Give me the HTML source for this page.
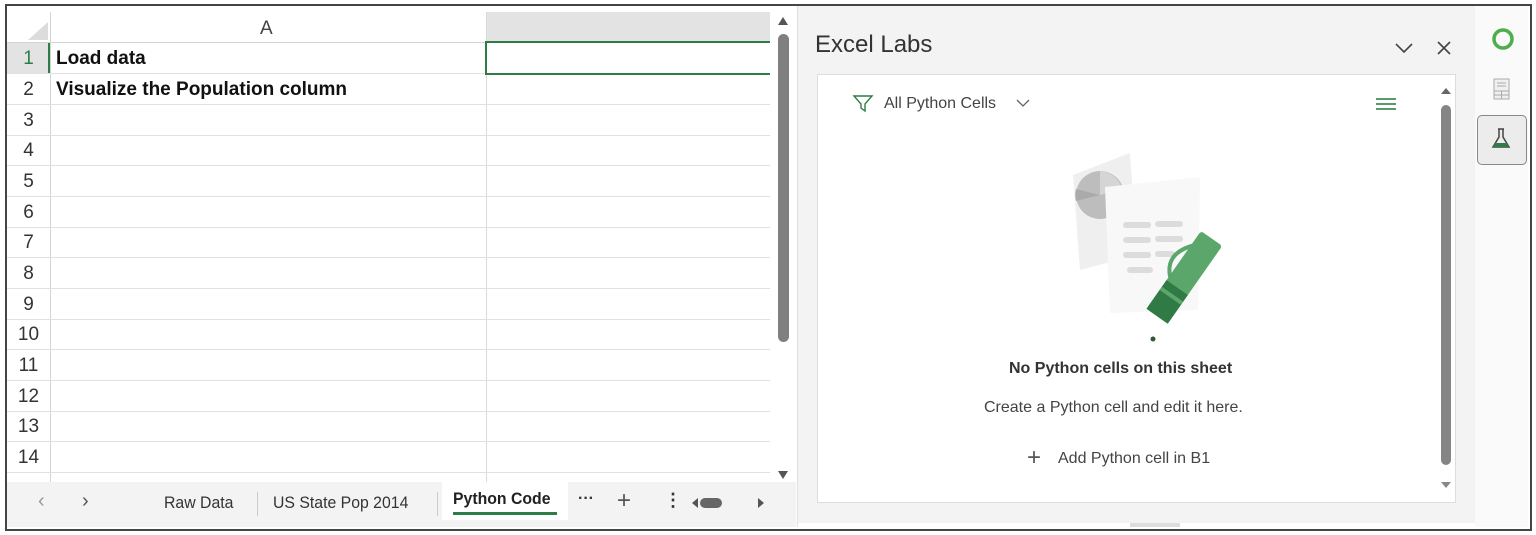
<!DOCTYPE html>
<html><head><style>
body{margin:0;width:1536px;height:535px;background:#fff;position:relative;overflow:hidden;font-family:"Liberation Sans",sans-serif}
.a{position:absolute}
.frame{left:5px;top:4px;width:1523px;height:523px;border:2px solid #444;box-sizing:content-box}
.hl{position:absolute;height:1px;background:#e1e1e1}
.rn{position:absolute;left:7px;width:43px;text-align:center;font-size:19px;color:#333}
.t{font-weight:bold;font-size:19px;color:#111;position:absolute;left:56px}
</style></head><body>
<div class="a frame"></div>
<div class="a" style="left:7px;top:12px;width:763px;height:30px;background:#fff;border-bottom:1px solid #d4d4d4"></div>
<div class="a" style="left:486px;top:12px;width:284px;height:30px;background:#e3e3e3;border-bottom:1px solid #c8c8c8"></div>
<svg class="a" style="left:28px;top:22px" width="20" height="18"><polygon points="20,0 20,18 0,18" fill="#dcdcdc"/></svg>
<div class="a" style="left:260px;top:18px;font-size:19px;color:#444">A</div>
<div class="a" style="left:50px;top:12px;width:1px;height:470px;background:#d4d4d4"></div>
<div class="a" style="left:486px;top:12px;width:1px;height:470px;background:#dadada"></div>
<div class="a" style="left:7px;top:43px;width:43px;height:30px;background:#e3e3e3"></div>
<div class="a" style="left:48px;top:43px;width:2px;height:30px;background:#2d7d46"></div>
<div class="hl" style="left:7px;top:73px;width:763px"></div>
<div class="hl" style="left:7px;top:104px;width:763px"></div>
<div class="hl" style="left:7px;top:135px;width:763px"></div>
<div class="hl" style="left:7px;top:165px;width:763px"></div>
<div class="hl" style="left:7px;top:196px;width:763px"></div>
<div class="hl" style="left:7px;top:227px;width:763px"></div>
<div class="hl" style="left:7px;top:257px;width:763px"></div>
<div class="hl" style="left:7px;top:288px;width:763px"></div>
<div class="hl" style="left:7px;top:319px;width:763px"></div>
<div class="hl" style="left:7px;top:349px;width:763px"></div>
<div class="hl" style="left:7px;top:380px;width:763px"></div>
<div class="hl" style="left:7px;top:411px;width:763px"></div>
<div class="hl" style="left:7px;top:441px;width:763px"></div>
<div class="hl" style="left:7px;top:472px;width:763px"></div>
<div class="rn" style="top:48px;color:#2d7d46">1</div>
<div class="rn" style="top:79px">2</div>
<div class="rn" style="top:110px">3</div>
<div class="rn" style="top:140px">4</div>
<div class="rn" style="top:171px">5</div>
<div class="rn" style="top:202px">6</div>
<div class="rn" style="top:232px">7</div>
<div class="rn" style="top:263px">8</div>
<div class="rn" style="top:294px">9</div>
<div class="rn" style="top:324px">10</div>
<div class="rn" style="top:355px">11</div>
<div class="rn" style="top:386px">12</div>
<div class="rn" style="top:416px">13</div>
<div class="rn" style="top:447px">14</div>
<div class="t" style="top:48px">Load data</div>
<div class="t" style="top:79px">Visualize the Population column</div>
<div class="a" style="left:485px;top:41px;width:285px;height:30px;border:2px solid #2d7d46;border-right:none"></div>
<div class="a" style="left:770px;top:12px;width:26px;height:470px;background:#fff"></div>
<svg class="a" style="left:777px;top:16px" width="12" height="10"><polygon points="6,1 11,9 1,9" fill="#555"/></svg>
<div class="a" style="left:778px;top:34px;width:11px;height:308px;background:#808080;border-radius:6px"></div>
<svg class="a" style="left:777px;top:470px" width="12" height="10"><polygon points="1,1 11,1 6,9" fill="#555"/></svg>
<div class="a" style="left:7px;top:482px;width:789px;height:45px;background:#f3f3f3"></div>
<div class="a" style="left:38px;top:490px;font-size:20px;color:#999">‹</div>
<div class="a" style="left:82px;top:490px;font-size:20px;color:#555">›</div>
<div class="a" style="left:164px;top:493px;font-size:17px;color:#333;transform:scaleX(.93);transform-origin:left">Raw Data</div>
<div class="a" style="left:257px;top:492px;width:1px;height:24px;background:#ccc"></div>
<div class="a" style="left:273px;top:493px;font-size:17px;color:#333;transform:scaleX(.93);transform-origin:left">US State Pop 2014</div>
<div class="a" style="left:437px;top:492px;width:1px;height:24px;background:#ccc"></div>
<div class="a" style="left:442px;top:482px;width:126px;height:38px;background:#fff"></div>
<div class="a" style="left:453px;top:489px;font-size:17px;color:#222;font-weight:bold;transform:scaleX(.93);transform-origin:left">Python Code</div>
<div class="a" style="left:453px;top:512px;width:104px;height:3px;background:#2d7d46"></div>
<div class="a" style="left:578px;top:490px;font-size:16px;color:#333;font-weight:bold">···</div>
<div class="a" style="left:617px;top:487px;font-size:24px;color:#555">+</div>
<div class="a" style="left:664px;top:490px;font-size:18px;color:#333;font-weight:bold">⋮</div>
<svg class="a" style="left:690px;top:495px" width="85" height="16"><polygon points="2,8 8,3 8,13" fill="#555"/><rect x="10" y="3" width="22" height="10" rx="5" fill="#666"/><polygon points="68,3 74,8 68,13" fill="#555"/></svg>
<div class="a" style="left:797px;top:6px;width:1px;height:521px;background:#e0e0e0"></div>
<div class="a" style="left:798px;top:6px;width:677px;height:517px;background:#f3f3f3"></div>
<div class="a" style="left:1475px;top:6px;width:53px;height:521px;background:#fafafa"></div>
<div class="a" style="left:815px;top:31px;font-size:24px;color:#333">Excel Labs</div>
<svg class="a" style="left:1394px;top:39px" width="64" height="18"><polyline points="2,5 10,13 18,5" fill="none" stroke="#444" stroke-width="1.6"/><path d="M44 3L56 15M56 3L44 15" stroke="#444" stroke-width="1.6"/></svg>
<div class="a" style="left:817px;top:74px;width:637px;height:427px;background:#fff;border:1px solid #ddd"></div>
<svg class="a" style="left:852px;top:94px" width="22" height="20"><path d="M2 2H20L13 10V17L9 14V10Z" fill="none" stroke="#2d7d46" stroke-width="1.4"/></svg>
<div class="a" style="left:884px;top:95px;font-size:16px;color:#444">All Python Cells</div>
<svg class="a" style="left:1015px;top:97px" width="16" height="12"><polyline points="2,3 8,9 14,3" fill="none" stroke="#666" stroke-width="1.3"/></svg>
<svg class="a" style="left:1375px;top:96px" width="22" height="16"><path d="M1 3H21M1 8H21M1 13H21" stroke="#5a9a6a" stroke-width="2"/></svg>
<svg class="a" style="left:1440px;top:86px" width="12" height="410"><polygon points="6,2 11,8 1,8" fill="#666"/><rect x="1" y="19" width="10" height="360" rx="5" fill="#858585"/><polygon points="1,396 11,396 6,402" fill="#888"/></svg>
<svg class="a" style="left:1055px;top:145px" width="180" height="205">
<path d="M18 30L75 8L82 110L25 125Z" fill="#efefef"/>
<circle cx="45" cy="50" r="24" fill="#bdbdbd"/>
<path d="M45 50L45 26A24 24 0 0 1 67 44Z" fill="#d5d5d5"/>
<path d="M45 50L21 56A24 24 0 0 1 21 44Z" fill="#aaa"/>
<path d="M50 42L145 32L143 165L55 168Z" fill="#f8f8f8"/>
<rect x="68" y="77" width="28" height="6" rx="3" fill="#dcdcdc"/><rect x="100" y="76" width="28" height="6" rx="3" fill="#dcdcdc"/>
<rect x="68" y="92" width="28" height="6" rx="3" fill="#dcdcdc"/><rect x="100" y="91" width="28" height="6" rx="3" fill="#dcdcdc"/>
<rect x="68" y="107" width="28" height="6" rx="3" fill="#dcdcdc"/><rect x="100" y="106" width="20" height="6" rx="3" fill="#dcdcdc"/>
<rect x="72" y="122" width="26" height="6" rx="3" fill="#dcdcdc"/>
<g transform="translate(152,100) rotate(35)">
<rect x="-13" y="-8" width="26" height="95" rx="3" fill="#5aa66b"/>
<rect x="-13" y="52" width="26" height="35" fill="#2f7a45"/>
<rect x="-13" y="60" width="26" height="4" fill="#5aa66b"/>
</g>
<path d="M116 135Q108 108 140 100" fill="none" stroke="#5aa66b" stroke-width="4" stroke-linecap="round"/>
<circle cx="98" cy="194" r="2.5" fill="#2e5a3a"/>
</svg>
<div class="a" style="left:1009px;top:360px;font-size:16px;font-weight:bold;color:#333">No Python cells on this sheet</div>
<div class="a" style="left:984px;top:399px;font-size:16px;color:#444">Create a Python cell and edit it here.</div>
<div class="a" style="left:1027px;top:444px;font-size:24px;color:#555;font-weight:300">+</div>
<div class="a" style="left:1058px;top:450px;font-size:16px;color:#444">Add Python cell in B1</div>
<div class="a" style="left:1130px;top:523px;width:50px;height:4px;background:#ddd"></div>
<svg class="a" style="left:1490px;top:26px" width="26" height="26"><circle cx="13" cy="13" r="9" fill="none" stroke="#4cae4c" stroke-width="3.5"/></svg>
<svg class="a" style="left:1492px;top:77px" width="20" height="24"><rect x="2" y="2" width="15" height="20" fill="#f0f0f0" stroke="#aaa"/><path d="M5 6H14M5 9H14M2 14H17M9.5 14V22M2 18H17" stroke="#aaa"/></svg>
<div class="a" style="left:1477px;top:115px;width:48px;height:48px;background:#ececec;border:1px solid #888;border-radius:5px"></div>
<svg class="a" style="left:1490px;top:126px" width="22" height="26"><path d="M8 3H14M9 3V11L3 21H19L13 11V3" fill="none" stroke="#444" stroke-width="1.5"/><path d="M5 17H17L19 21H3Z" fill="#2d7d46"/></svg>
</body></html>
